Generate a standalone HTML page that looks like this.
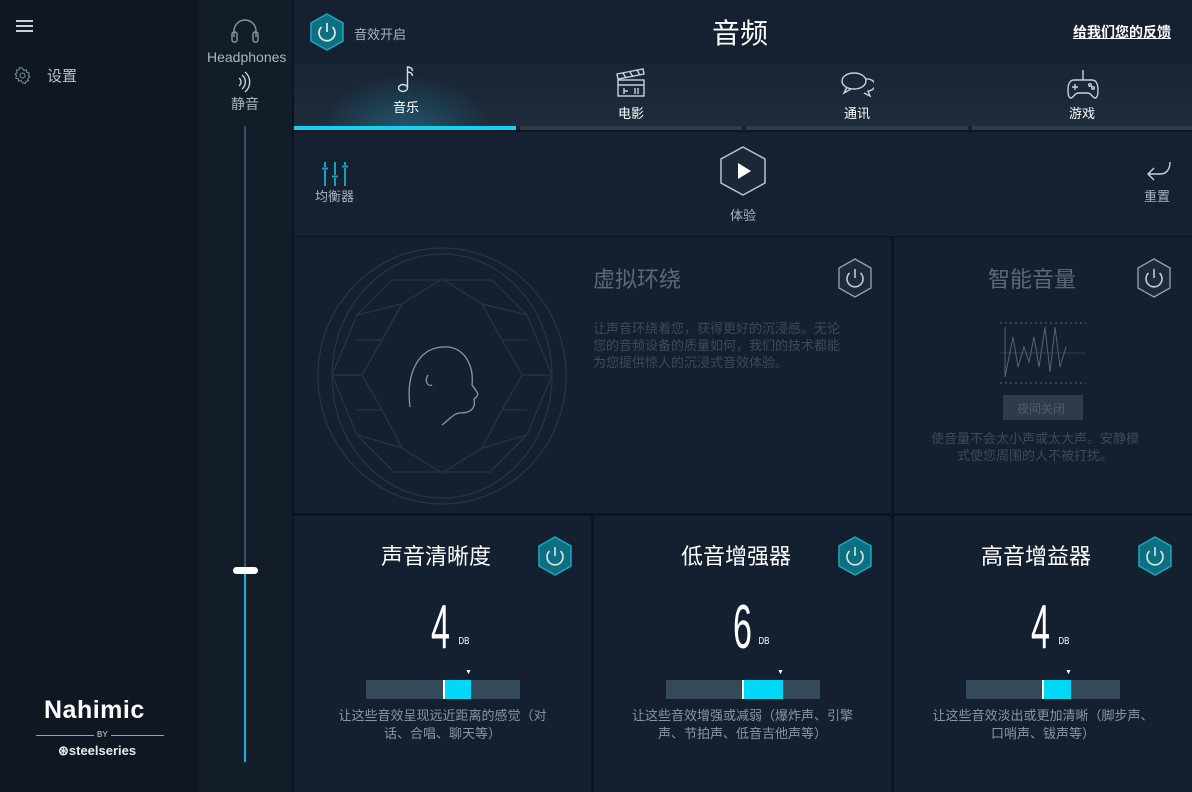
<!DOCTYPE html>
<html><head><meta charset="utf-8"><style>
*{margin:0;padding:0;box-sizing:border-box}
body{width:1192px;height:792px;overflow:hidden;background:#0c141d;font-family:"Liberation Sans","Noto Sans CJK SC",sans-serif;color:#c9d1d9;position:relative}
.abs{position:absolute}
.side{left:0;top:0;width:198px;height:792px;background:#0f1723}
.col{left:198px;top:0;width:94px;height:792px;background:#131d29}
.main{left:294px;top:0;width:898px;height:236px;background:#152130}
.panel{background:#142030}
.t{position:absolute;white-space:nowrap}
.bar{position:absolute;height:19px;background:#344a58}
.num{position:absolute;font-size:62px;line-height:62px;color:#fff;transform:scaleX(.55);transform-origin:left top}
</style></head><body>
<div class="abs side"></div>
<div class="abs col"></div>
<div class="abs main"></div>
<!-- sidebar -->
<div class="abs" style="left:16px;top:20px;width:17px;height:2px;background:#c9d1d9;box-shadow:0 5px 0 #c9d1d9,0 10px 0 #c9d1d9"></div>
<svg class="abs" style="left:14px;top:67px" width="17" height="17" viewBox="0 0 24 24" fill="none" stroke="#7a8592" stroke-width="1.5"><circle cx="12" cy="12" r="3.5"/><path d="M12 2l2 3 3.5-1 .5 3.5 3.5 1-1 3.5 2 2-3 2 1 3.5-3.5.5-1 3.5-3.5-1L12 22l-2-3-3.5 1-.5-3.5-3.5-1 1-3.5-2-2 3-2-1-3.5 3.5-.5 1-3.5 3.5 1z"/></svg>
<div class="t" style="left:47px;top:65px;font-size:15px;color:#b9c1ca">设置</div>
<div class="t" style="left:44px;top:696px;font-size:25px;font-weight:bold;color:#fff;letter-spacing:0.5px">Nahimic</div>
<div class="abs" style="left:36px;top:735px;width:128px;height:1px;background:#9aa3ad"></div>
<div class="t" style="left:94px;top:730px;font-size:8px;color:#ddd;background:#0f1723;padding:0 3px">BY</div>
<div class="t" style="left:58px;top:743px;font-size:13px;font-weight:bold;color:#e8e8e8">⊛steelseries</div>
<!-- column -->
<svg class="abs" style="left:229px;top:15px" width="32" height="30" viewBox="0 0 32 30" fill="none" stroke="#8a96a3" stroke-width="1.4"><path d="M5 22V16a11 11 0 0 1 22 0v6"/><rect x="3" y="17" width="5" height="10" rx="2"/><rect x="24" y="17" width="5" height="10" rx="2"/></svg>
<div class="t" style="left:207px;top:49px;font-size:14px;color:#aab4be">Headphones</div>
<svg class="abs" style="left:236px;top:71px" width="16" height="22" viewBox="0 0 16 22" fill="none" stroke="#c9d1d9" stroke-width="1.4"><path d="M3 7a5 5 0 0 1 0 8M6 4a9 9 0 0 1 0 14M9 1a13 13 0 0 1 0 20"/></svg>
<div class="t" style="left:231px;top:94px;font-size:14px;color:#aab4be">静音</div>
<div class="abs" style="left:244px;top:126px;width:2px;height:636px;background:#3b5060"></div>
<div class="abs" style="left:244px;top:570px;width:2px;height:192px;background:#16b6d8"></div>
<div class="abs" style="left:233px;top:567px;width:25px;height:7px;border-radius:4px;background:#fff"></div>
<!-- header -->
<svg class="abs" style="left:309px;top:13px" width="36" height="38" viewBox="0 0 36 38"><polygon points="18,1 34,10 34,28 18,37 2,28 2,10" fill="#0e6f80" stroke="#1aa7c0" stroke-width="1.5"/><path d="M12.5 14a8 8 0 1 0 11 0" fill="none" stroke="#d8e6ea" stroke-width="1.8"/><path d="M18 10v9" stroke="#d8e6ea" stroke-width="1.8"/></svg>
<div class="t" style="left:354px;top:24px;font-size:13px;color:#aab4be">音效开启</div>
<div class="t" style="left:712px;top:12px;font-size:28px;color:#fff">音频</div>
<div class="t" style="left:1073px;top:22px;font-size:14px;font-weight:bold;color:#fff;text-decoration:underline">给我们您的反馈</div>
<!-- tabs -->
<div class="abs" style="left:294px;top:64px;width:898px;height:62px;background:linear-gradient(#182535,#1d2b3a)"></div>
<div class="abs" style="left:310px;top:70px;width:190px;height:60px;background:radial-gradient(ellipse at 50% 100%,rgba(40,130,160,.5),rgba(40,130,160,0) 65%)"></div>
<div class="abs" style="left:294px;top:126px;width:222px;height:4px;background:#13d3f5"></div>
<div class="abs" style="left:520px;top:126px;width:222px;height:4px;background:#2d3c4a"></div>
<div class="abs" style="left:746px;top:126px;width:222px;height:4px;background:#2d3c4a"></div>
<div class="abs" style="left:972px;top:126px;width:220px;height:4px;background:#2d3c4a"></div>
<svg class="abs" style="left:396px;top:64px" width="20" height="30" viewBox="0 0 20 30" fill="none" stroke="#d8dde2" stroke-width="1.4"><ellipse cx="7" cy="24" rx="4.5" ry="3.5"/><path d="M11.5 24V3c2 0 5 1 5 4"/><path d="M11.5 8c2 0 5 1 5 4"/></svg>
<div class="t" style="left:393px;top:97px;font-size:13px;color:#fff">音乐</div>
<svg class="abs" style="left:615px;top:68px" width="32" height="30" viewBox="0 0 32 30" fill="none" stroke="#c9d1d9" stroke-width="1.4"><rect x="3" y="12" width="26" height="16"/><path d="M2 6l26-5 1 5-26 5zM8 5l3 5M15 4l3 5M22 2l3 5M3 17h26"/><path d="M9 20v6M9 23h4M20 20v6M23 20v6"/></svg>
<div class="t" style="left:618px;top:103px;font-size:13px;color:#fff">电影</div>
<svg class="abs" style="left:840px;top:70px" width="34" height="28" viewBox="0 0 34 28" fill="none" stroke="#c9d1d9" stroke-width="1.4"><ellipse cx="14" cy="11" rx="12" ry="8"/><path d="M7 17l-3 6 7-4"/><path d="M26 9a8 6 0 0 1 2 12l2 5-6-3"/></svg>
<div class="t" style="left:844px;top:103px;font-size:13px;color:#fff">通讯</div>
<svg class="abs" style="left:1066px;top:68px" width="34" height="32" viewBox="0 0 34 32" fill="none" stroke="#c9d1d9" stroke-width="1.4"><path d="M17 2v10"/><path d="M8 12h18c4 0 6 4 6 10s-1 8-3 8-4-5-7-5H12c-3 0-5 5-7 5s-3-2-3-8 2-10 6-10z"/><path d="M9 16v6M6 19h6"/><circle cx="24" cy="17" r="1.3"/><circle cx="27" cy="20" r="1.3"/></svg>
<div class="t" style="left:1069px;top:103px;font-size:13px;color:#fff">游戏</div>
<!-- toolbar -->
<div class="abs" style="left:294px;top:130px;width:898px;height:2px;background:#0e1620"></div>
<svg class="abs" style="left:321px;top:162px" width="28" height="24" viewBox="0 0 28 24" stroke="#1a9fb8" stroke-width="2"><path d="M4 0v5M4 8v16M14 0v13M14 16v8M24 0v3M24 6v18M1 6.5h6M11 14.5h6M21 4.5h6" /></svg>
<div class="t" style="left:315px;top:186px;font-size:13px;color:#aab4be">均衡器</div>
<svg class="abs" style="left:720px;top:146px" width="46" height="50" viewBox="0 0 46 50"><polygon points="23,1 45,13 45,37 23,49 1,37 1,13" fill="#1a2736" stroke="#b8c2cc" stroke-width="1.5"/><polygon points="18,17 31,25 18,33" fill="#fff"/></svg>
<div class="t" style="left:730px;top:205px;font-size:13px;color:#aab4be">体验</div>
<svg class="abs" style="left:1145px;top:160px" width="28" height="24" viewBox="0 0 28 24" fill="none" stroke="#c9d1d9" stroke-width="1.4"><path d="M25 2c0 8-4 12-10 12H3M9 8l-6 6 6 6"/></svg>
<div class="t" style="left:1144px;top:186px;font-size:13px;color:#aab4be">重置</div>
<!-- panels -->
<div class="abs panel" style="left:294px;top:237px;width:597px;height:276px"></div>
<div class="abs panel" style="left:894px;top:237px;width:298px;height:276px"></div>
<div class="abs panel" style="left:294px;top:516px;width:297px;height:276px"></div>
<div class="abs panel" style="left:594px;top:516px;width:297px;height:276px"></div>
<div class="abs panel" style="left:894px;top:516px;width:298px;height:276px"></div>
<!-- sphere -->
<svg class="abs" style="left:310px;top:242px" width="265" height="268" viewBox="0 0 265 268" fill="none" stroke="#253444" stroke-width="1.3"><ellipse cx="132" cy="134" rx="124" ry="128"/><ellipse cx="132" cy="134" rx="110" ry="122"/><path d="M82 38l-35 35-25 60 25 60 35 35M182 38l35 35 25 60-25 60-35 35M82 38h100M82 230h100M92 62l40-25 40 25M92 206l40 25 40-25M47 73l45-11M217 73l-45-11M47 193l45 13M217 193l-45 13M22 133h30M212 133h30M52 133l20-35 20-36M52 133l20 35 20 38M212 133l-20-35-20-36M212 133l-20 35-20 38M92 62v0M72 98h-25M72 168h-25M192 98h25M192 168h25"/><path d="M100 165c-4-30 6-58 32-60 22-2 32 18 30 38 6 8 8 10 2 14 2 10-4 14-14 14-6 0-10 6-18 12" stroke="#8a96a3"/><path d="M118 133c-4 6 0 12 4 10" stroke="#8a96a3"/></svg>
<div class="t" style="left:593px;top:262px;font-size:22px;color:#5b6876">虚拟环绕</div>
<svg class="abs" style="left:837px;top:258px" width="36" height="40" viewBox="0 0 36 40"><polygon points="18,1 34,10 34,30 18,39 2,30 2,10" fill="#1c2a39" stroke="#98a3ae" stroke-width="1.3"/><path d="M12.5 15a8 8 0 1 0 11 0" fill="none" stroke="#c0c8d0" stroke-width="1.6"/><path d="M18 11v9" stroke="#c0c8d0" stroke-width="1.6"/></svg>
<div class="t" style="left:593px;top:320px;font-size:13px;line-height:17px;color:#3b4958">让声音环绕着您，获得更好的沉浸感。无论<br>您的音频设备的质量如何，我们的技术都能<br>为您提供惊人的沉浸式音效体验。</div>
<div class="t" style="left:988px;top:262px;font-size:22px;color:#5b6876">智能音量</div>
<svg class="abs" style="left:1136px;top:258px" width="36" height="40" viewBox="0 0 36 40"><polygon points="18,1 34,10 34,30 18,39 2,30 2,10" fill="#1c2a39" stroke="#98a3ae" stroke-width="1.3"/><path d="M12.5 15a8 8 0 1 0 11 0" fill="none" stroke="#c0c8d0" stroke-width="1.6"/><path d="M18 11v9" stroke="#c0c8d0" stroke-width="1.6"/></svg>
<svg class="abs" style="left:1000px;top:322px" width="86" height="62" viewBox="0 0 86 62" fill="none" stroke="#556271"><path d="M0 1h86M0 61h86" stroke-dasharray="2 3"/><path d="M0 31h86" stroke="#2f3c4b"/><path d="M5 5v50l8-40 5 30 6-20 5 15 5-25 5 30 6-40 5 45 5-45 5 40 6-20"/></svg>
<div class="abs" style="left:1003px;top:395px;width:80px;height:25px;background:#2e3c4a"></div>
<div class="t" style="left:1017px;top:400px;font-size:12px;color:#4f5d6b">夜间关闭</div>
<div class="t" style="left:931px;top:430px;font-size:13px;line-height:17px;color:#3b4958;text-align:center">使音量不会太小声或太大声。安静模<br>式使您周围的人不被打扰。</div>
<!-- bottom panels -->
<div class="t" style="left:381px;top:539px;font-size:22px;color:#fff">声音清晰度</div>
<div class="t" style="left:681px;top:539px;font-size:22px;color:#fff">低音增强器</div>
<div class="t" style="left:981px;top:539px;font-size:22px;color:#fff">高音增益器</div>
<svg class="abs" style="left:537px;top:536px" width="36" height="40" viewBox="0 0 36 40"><polygon points="18,1 34,10 34,30 18,39 2,30 2,10" fill="#0e6f80" stroke="#1aa7c0" stroke-width="1.5"/><path d="M12.5 15a8 8 0 1 0 11 0" fill="none" stroke="#d8e6ea" stroke-width="1.6"/><path d="M18 11v9" stroke="#d8e6ea" stroke-width="1.6"/></svg>
<svg class="abs" style="left:837px;top:536px" width="36" height="40" viewBox="0 0 36 40"><polygon points="18,1 34,10 34,30 18,39 2,30 2,10" fill="#0e6f80" stroke="#1aa7c0" stroke-width="1.5"/><path d="M12.5 15a8 8 0 1 0 11 0" fill="none" stroke="#d8e6ea" stroke-width="1.6"/><path d="M18 11v9" stroke="#d8e6ea" stroke-width="1.6"/></svg>
<svg class="abs" style="left:1137px;top:536px" width="36" height="40" viewBox="0 0 36 40"><polygon points="18,1 34,10 34,30 18,39 2,30 2,10" fill="#0e6f80" stroke="#1aa7c0" stroke-width="1.5"/><path d="M12.5 15a8 8 0 1 0 11 0" fill="none" stroke="#d8e6ea" stroke-width="1.6"/><path d="M18 11v9" stroke="#d8e6ea" stroke-width="1.6"/></svg>
<div class="num" style="left:431px;top:597px">4</div>
<div class="t" style="left:457px;top:636px;font-size:10px;color:#fff;transform:scaleX(.8)">DB</div>
<div class="num" style="left:733px;top:597px">6</div>
<div class="t" style="left:757px;top:636px;font-size:10px;color:#fff;transform:scaleX(.8)">DB</div>
<div class="num" style="left:1031px;top:597px">4</div>
<div class="t" style="left:1057px;top:636px;font-size:10px;color:#fff;transform:scaleX(.8)">DB</div>
<div class="bar" style="left:366px;top:680px;width:154px"></div>
<div class="abs" style="left:443px;top:680px;width:28px;height:19px;background:#00d8f8;border-left:2px solid #fff"></div>
<div class="t" style="left:465px;top:669px;font-size:7px;color:#fff">▼</div>
<div class="bar" style="left:666px;top:680px;width:154px"></div>
<div class="abs" style="left:742px;top:680px;width:41px;height:19px;background:#00d8f8;border-left:2px solid #fff"></div>
<div class="t" style="left:777px;top:669px;font-size:7px;color:#fff">▼</div>
<div class="bar" style="left:966px;top:680px;width:154px"></div>
<div class="abs" style="left:1042px;top:680px;width:29px;height:19px;background:#00d8f8;border-left:2px solid #fff"></div>
<div class="t" style="left:1065px;top:669px;font-size:7px;color:#fff">▼</div>
<div class="t" style="left:294px;top:707px;width:297px;font-size:13px;line-height:18px;color:#8a95a1;text-align:center">让这些音效呈现远近距离的感觉（对<br>话、合唱、聊天等）</div>
<div class="t" style="left:594px;top:707px;width:297px;font-size:13px;line-height:18px;color:#8a95a1;text-align:center">让这些音效增强或减弱（爆炸声、引擎<br>声、节拍声、低音吉他声等）</div>
<div class="t" style="left:894px;top:707px;width:298px;font-size:13px;line-height:18px;color:#8a95a1;text-align:center">让这些音效淡出或更加清晰（脚步声、<br>口哨声、钹声等）</div>
</body></html>
